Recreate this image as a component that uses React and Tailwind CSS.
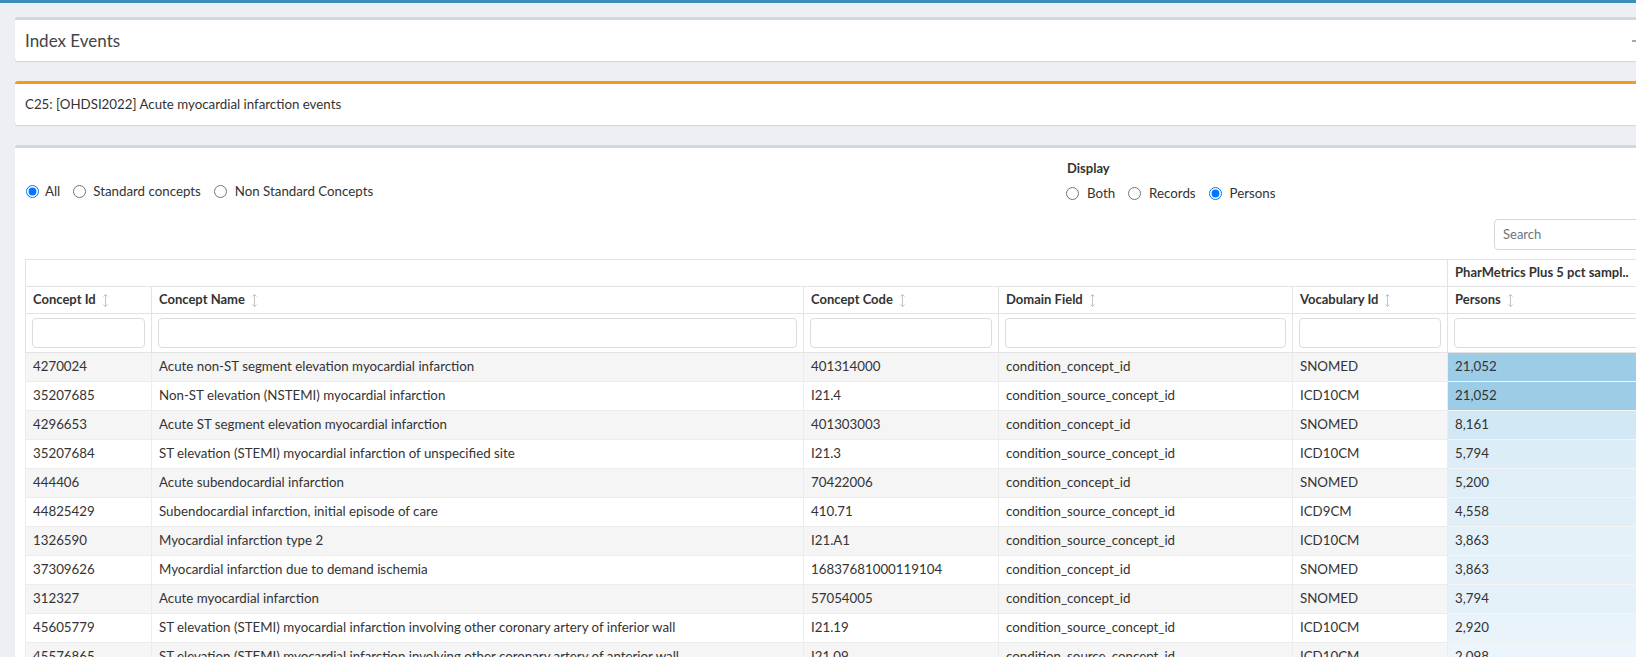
import React from "react";

const rows = [
  ["4270024", "Acute non-ST segment elevation myocardial infarction", "401314000", "condition_concept_id", "SNOMED", 21052],
  ["35207685", "Non-ST elevation (NSTEMI) myocardial infarction", "I21.4", "condition_source_concept_id", "ICD10CM", 21052],
  ["4296653", "Acute ST segment elevation myocardial infarction", "401303003", "condition_concept_id", "SNOMED", 8161],
  ["35207684", "ST elevation (STEMI) myocardial infarction of unspecified site", "I21.3", "condition_source_concept_id", "ICD10CM", 5794],
  ["444406", "Acute subendocardial infarction", "70422006", "condition_concept_id", "SNOMED", 5200],
  ["44825429", "Subendocardial infarction, initial episode of care", "410.71", "condition_source_concept_id", "ICD9CM", 4558],
  ["1326590", "Myocardial infarction type 2", "I21.A1", "condition_source_concept_id", "ICD10CM", 3863],
  ["37309626", "Myocardial infarction due to demand ischemia", "16837681000119104", "condition_concept_id", "SNOMED", 3863],
  ["312327", "Acute myocardial infarction", "57054005", "condition_concept_id", "SNOMED", 3794],
  ["45605779", "ST elevation (STEMI) myocardial infarction involving other coronary artery of inferior wall", "I21.19", "condition_source_concept_id", "ICD10CM", 2920],
  ["45576865", "ST elevation (STEMI) myocardial infarction involving other coronary artery of anterior wall", "I21.09", "condition_source_concept_id", "ICD10CM", 2098],
];

const MAX = 21052;
function barColor(v) {
  const t = v / MAX;
  const lo = [244, 249, 253];
  const hi = [157, 205, 230];
  const c = lo.map((l, i) => Math.round(l + (hi[i] - l) * t));
  return `rgb(${c[0]},${c[1]},${c[2]})`;
}

function SortIcon() {
  return (
    <svg width="7" height="15" viewBox="0 0 7 15" className="inline-block ml-[6px] -mt-[1px] align-middle">
      <path d="M3.5 1.5 V13.5 M1.5 3.5 L3.5 1.5 L5.5 3.5 M1.5 11.5 L3.5 13.5 L5.5 11.5" stroke="#c4c4c4" strokeWidth="1" fill="none" />
    </svg>
  );
}

function Radio({ label, checked, gap = "gap-[6px]" }) {
  return (
    <label className={`flex items-center ${gap}`}>
      <input type="radio" defaultChecked={checked} name={label} className="m-0 w-[13px] h-[13px] accent-[#0075ff]" />
      <span>{label}</span>
    </label>
  );
}

export default function App() {
  const headers = ["Concept Id", "Concept Name", "Concept Code", "Domain Field", "Vocabulary Id", "Persons"];
  return (
    <div className="w-[1636px] h-[657px] overflow-hidden bg-[#ecf0f5] text-[#333] font-['Lato',sans-serif]">
      <div className="h-[3px] bg-[#3c8dbc]" />
      <div className="w-[1665px] pl-[15px] pt-[14px] flex flex-col gap-[20px]">
        <div className="h-[44px] bg-white border-t-[3px] border-[#d2d6de] rounded-[3px] shadow-[0_1px_1px_rgba(0,0,0,0.12)] flex items-center justify-between pl-[10px] pr-[23px]">
          <span className="text-[17px] text-[#444]">Index Events</span>
          <span className="w-[10px] h-[2px] bg-[#a0a7b9]" />
        </div>
        <div className="h-[44px] bg-white border-t-[3px] border-[#f39c12] rounded-[3px] shadow-[0_1px_1px_rgba(0,0,0,0.12)] flex items-center pl-[10px]">
          <span className="text-[13.3px] text-[#333]">C25: [OHDSI2022] Acute myocardial infarction events</span>
        </div>
        <div className="h-[520px] bg-white border-t-[3px] border-[#d2d6de] rounded-[3px] px-[10px]">
          <div className="pt-[11px] h-[67px] flex text-[13.3px]">
            <div className="w-[1042px] pt-[22px]">
              <div className="flex items-center gap-[13px] leading-[20px] pl-[1px]">
                <Radio label="All" checked />
                <Radio label="Standard concepts" gap="gap-[7px]" />
                <Radio label="Non Standard Concepts" gap="gap-[8px]" />
              </div>
            </div>
            <div>
              <div className="font-bold text-[13px] leading-[20px] text-[#333] -mt-[1px]">Display</div>
              <div className="mt-[5px] flex items-center gap-[13px] leading-[20px] -ml-[1px]">
                <Radio label="Both" gap="gap-[8px]" />
                <Radio label="Records" gap="gap-[8px]" />
                <Radio label="Persons" checked gap="gap-[8px]" />
              </div>
            </div>
          </div>
          <div className="mt-[4px] flex justify-end">
            <div className="w-[161px] h-[31px] border border-[#d5d9de] rounded-[4px] flex items-center pl-[8px] text-[13px] text-[#6c757d]">
              Search
            </div>
          </div>
          <table className="mt-[9px] table-fixed border-collapse w-[1630px] text-[13.3px] text-[#333]">
            <colgroup>
              <col className="w-[126px]" />
              <col className="w-[652px]" />
              <col className="w-[195px]" />
              <col className="w-[294px]" />
              <col className="w-[155px]" />
              <col className="w-[208px]" />
            </colgroup>
            <thead className="text-[13px]">
              <tr className="h-[27px]">
                <th colSpan={5} className="border border-[#e3e3e3]" />
                <th className="border border-[#e3e3e3] text-left font-bold px-[7px] whitespace-nowrap overflow-hidden">
                  PharMetrics Plus 5 pct sampl..
                </th>
              </tr>
              <tr className="h-[27px]">
                {headers.map((h) => (
                  <th key={h} className="border border-[#e3e3e3] text-left font-bold px-[7px] whitespace-nowrap">
                    {h}
                    <SortIcon />
                  </th>
                ))}
              </tr>
              <tr className="h-[39px]">
                {headers.map((h) => (
                  <td key={h} className="border border-[#e3e3e3] px-[6px]">
                    <div className="h-[30px] border border-[#dcdcdc] rounded-[4px] bg-white" />
                  </td>
                ))}
              </tr>
            </thead>
            <tbody>
              {rows.map((r, i) => (
                <tr key={i} className={`h-[29px] ${i % 2 === 0 ? "bg-[#f5f5f5]" : "bg-white"}`}>
                  {r.slice(0, 5).map((c, j) => (
                    <td key={j} className="border-t border-r border-[#ececec] px-[7px] whitespace-nowrap first:border-l">
                      {c}
                    </td>
                  ))}
                  <td className="border-t border-[#f4f4f4] px-[7px]" style={{ backgroundColor: barColor(r[5]) }}>
                    {r[5].toLocaleString("en-US")}
                  </td>
                </tr>
              ))}
            </tbody>
          </table>
        </div>
      </div>
    </div>
  );
}
